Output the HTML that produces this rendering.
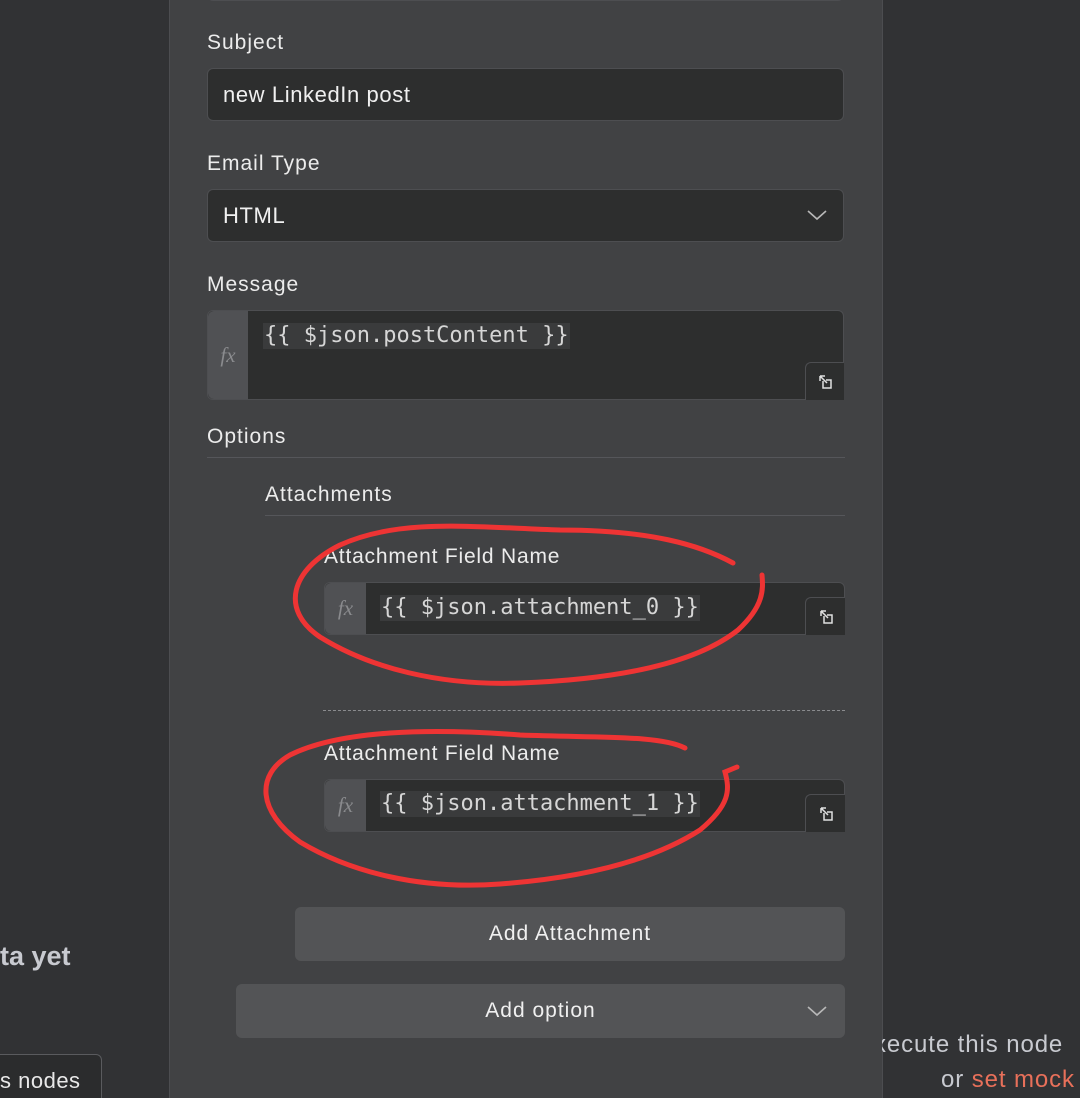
<!DOCTYPE html>
<html><head><meta charset="utf-8"><style>
*{box-sizing:border-box;margin:0;padding:0}
html,body{width:1080px;height:1098px;overflow:hidden}
body{background:#313234;position:relative;font-family:"Liberation Sans",sans-serif;color:#e8e8e8}
.a{position:absolute}
.panel{left:169px;top:0;width:714px;height:1098px;background:#414244;border-left:1px solid #4c4d50;border-right:1px solid #4c4d50}
.lbl{font-size:21px;letter-spacing:1px;color:#ececec;white-space:nowrap}
.inp{background:#2d2e2e;border:1px solid #4d4e51;border-radius:6px}
.txt{font-size:22px;letter-spacing:0.6px;color:#f0f0f0;white-space:nowrap}
.fx{background:#505154;color:#8a8b8e;font-family:"Liberation Serif",serif;font-style:italic;font-size:21px;display:flex;align-items:center;justify-content:center;border-radius:6px 0 0 6px}
.code{font-family:"DejaVu Sans Mono","Liberation Mono",monospace;font-size:22px;color:#d6d6d6;background:#3a3b3c;white-space:nowrap;padding:0 1px;line-height:26px}
.exp{background:#2d2e2e;border:1px solid #4d4e51;border-radius:6px 0 0 0;border-right:none;border-bottom:none;display:flex;align-items:center;justify-content:center}
.btn{background:#535456;border-radius:6px;font-size:21px;letter-spacing:1px;color:#f0f0f0;display:flex;align-items:center;justify-content:center}
</style></head><body>
<div class="a panel"></div>
<div class="a" style="left:207px;top:-6px;width:637px;height:7px;border:1px solid #4d4e51;border-top:none;border-radius:0 0 6px 6px;background:#2d2e2e"></div>

<div class="a lbl" style="left:207px;top:31px">Subject</div>
<div class="a inp" style="left:207px;top:68px;width:637px;height:53px"></div>
<div class="a txt" style="left:223px;top:82px">new LinkedIn post</div>

<div class="a lbl" style="left:207px;top:152px">Email Type</div>
<div class="a inp" style="left:207px;top:189px;width:637px;height:53px"></div>
<div class="a txt" style="left:223px;top:203px">HTML</div>
<svg class="a" style="left:806px;top:208px" width="22" height="14"><path d="M2 3 L11 11 L20 3" fill="none" stroke="#b8b8b8" stroke-width="1.6"/></svg>

<div class="a lbl" style="left:207px;top:273px">Message</div>
<div class="a inp" style="left:207px;top:310px;width:637px;height:90px;overflow:hidden"></div>
<div class="a fx" style="left:208px;top:311px;width:40px;height:88px">fx</div>
<div class="a code" style="left:263px;top:323px">{{ $json.postContent }}</div>
<div class="a exp" style="left:805px;top:362px;width:39px;height:38px"><svg width="16" height="16"><path d="M3 2 L3 7 M3 2 L8 2 M3 2 L10 9 M6 7 L6 14 L14 14 L14 6 L9 6" fill="none" stroke="#e0e0e0" stroke-width="1.5"/></svg></div>

<div class="a lbl" style="left:207px;top:425px">Options</div>
<div class="a" style="left:207px;top:457px;width:638px;height:1px;background:#55565a"></div>
<div class="a lbl" style="left:265px;top:483px">Attachments</div>
<div class="a" style="left:265px;top:515px;width:580px;height:1px;background:#55565a"></div>

<div class="a lbl" style="left:324px;top:545px;letter-spacing:0.8px">Attachment Field Name</div>
<div class="a inp" style="left:324px;top:582px;width:521px;height:53px"></div>
<div class="a fx" style="left:325px;top:583px;width:41px;height:51px">fx</div>
<div class="a code" style="left:380px;top:595px">{{ $json.attachment_0 }}</div>
<div class="a exp" style="left:805px;top:597px;width:40px;height:38px"><svg width="16" height="16"><path d="M3 2 L3 7 M3 2 L8 2 M3 2 L10 9 M6 7 L6 14 L14 14 L14 6 L9 6" fill="none" stroke="#e0e0e0" stroke-width="1.5"/></svg></div>

<div class="a" style="left:323px;top:710px;width:522px;border-top:1px dashed #8a8b8e"></div>

<div class="a lbl" style="left:324px;top:742px;letter-spacing:0.8px">Attachment Field Name</div>
<div class="a inp" style="left:324px;top:779px;width:521px;height:53px"></div>
<div class="a fx" style="left:325px;top:780px;width:41px;height:51px">fx</div>
<div class="a code" style="left:380px;top:791px">{{ $json.attachment_1 }}</div>
<div class="a exp" style="left:805px;top:794px;width:40px;height:38px"><svg width="16" height="16"><path d="M3 2 L3 7 M3 2 L8 2 M3 2 L10 9 M6 7 L6 14 L14 14 L14 6 L9 6" fill="none" stroke="#e0e0e0" stroke-width="1.5"/></svg></div>

<div class="a btn" style="left:295px;top:907px;width:550px;height:54px">Add Attachment</div>
<div class="a btn" style="left:236px;top:984px;width:609px;height:54px">Add option</div>
<svg class="a" style="left:806px;top:1004px" width="22" height="14"><path d="M2 3 L11 11 L20 3" fill="none" stroke="#b8b8b8" stroke-width="1.6"/></svg>

<div class="a" style="left:0;top:941px;font-size:27px;font-weight:bold;color:#c8cad0;white-space:nowrap">ta yet</div>
<div class="a" style="left:-20px;top:1054px;width:122px;height:60px;background:#2b2c2d;border:1px solid #5a5b5e;border-radius:6px"></div>
<div class="a" style="left:0;top:1068px;font-size:22px;letter-spacing:0.5px;color:#e8e8e8;white-space:nowrap">s nodes</div>
<div class="a" style="left:874px;top:1031px;font-size:24px;letter-spacing:0.9px;color:#c8cad0;white-space:nowrap">xecute this node</div>
<div class="a" style="left:941px;top:1066px;font-size:24px;letter-spacing:0.9px;color:#c8cad0;white-space:nowrap">or <span style="color:#e8705a">set mock</span></div>
<div class="a" style="left:869px;top:1030px;width:13px;height:40px;background:#414244"></div>

<svg class="a" style="left:0;top:0" width="1080" height="1098">
<path d="M733,563 C700,545 650,530 560,530 C470,527 400,518 340,545 C290,570 280,610 320,637 C370,668 440,686 520,683 C600,680 690,668 738,630 C765,605 763,588 762,575" fill="none" stroke="#ee3434" stroke-width="5" stroke-linecap="round"/>
<path d="M685,748 C660,735 600,738 520,735 C430,728 340,730 290,755 C255,775 258,812 300,842 C350,872 420,890 500,884 C580,878 650,862 700,830 C730,805 730,790 725,772 L737,767" fill="none" stroke="#ee3434" stroke-width="5" stroke-linecap="round"/>
</svg>
</body></html>
